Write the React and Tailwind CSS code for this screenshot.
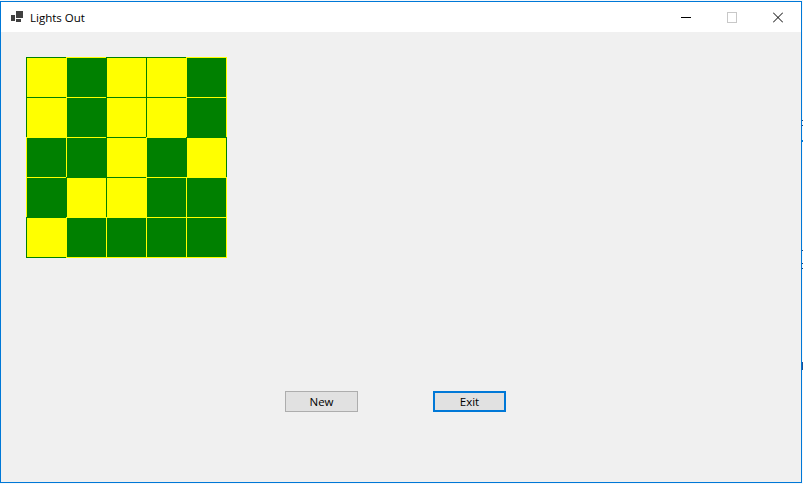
import React from 'react'

const Y = 1
const G = 0

const board = [
    [Y, G, Y, Y, G],
    [Y, G, Y, Y, G],
    [G, G, Y, G, Y],
    [G, Y, Y, G, G],
    [Y, G, G, G, G],
]

function Cell({ on }) {
    // cells are a pixel wider than their track, so each border sits on the last one
    return (
        <div
            className={
                on
                    ? 'w-[41px] h-[41px] bg-[#ffff00] border border-[#008000]'
                    : 'w-[41px] h-[41px] bg-[#008000] border border-[#ffff00]'
            }
        />
    )
}

export default function App() {
    return (
        <div className="relative w-[803px] h-[484px] pt-[1px] bg-[#f4f8fc] overflow-hidden font-['Open_Sans','Liberation_Sans',sans-serif] text-[11.5px] text-black">
            <div className="w-[802px] h-[482px] flex flex-col border border-[#0078d7]">
                {/* Title bar */}
                <div className="h-[30px] bg-white flex items-center shrink-0">
                    <svg className="ml-[10px] mt-[1px]" width="13" height="13" viewBox="0 0 13 13" fill="#404040">
                        <rect x="0" y="4" width="4" height="6" />
                        <rect x="5" y="0" width="7" height="7" />
                        <rect x="5" y="8" width="5" height="3" />
                    </svg>
                    <span className="ml-[6px] mt-[1px]">Lights Out</span>
                    <div className="ml-auto mr-[18px] flex items-center gap-[36px] mt-[1px]">
                        <svg width="10" height="11" viewBox="0 0 10 11" stroke="#000" shapeRendering="crispEdges">
                            <line x1="0" y1="5.5" x2="10" y2="5.5" />
                        </svg>
                        <svg width="10" height="11" viewBox="0 0 10 11" fill="none" stroke="#c8c8c8" shapeRendering="crispEdges">
                            <rect x="0.5" y="0.5" width="9" height="10" />
                        </svg>
                        <svg width="10" height="11" viewBox="0 0 10 11" stroke="#000" strokeWidth="1">
                            <line x1="0" y1="0.5" x2="10" y2="10.5" />
                            <line x1="10" y1="0.5" x2="0" y2="10.5" />
                        </svg>
                    </div>
                </div>

                {/* Client area */}
                <div className="flex-1 bg-[#f0f0f0] flex flex-col">
                    <div className="ml-[25px] mt-[25px] grid grid-cols-[repeat(5,40px)] grid-rows-[repeat(5,40px)] w-[200px]">
                        {board.flat().map((on, i) => (
                            <Cell key={i} on={on === Y} />
                        ))}
                    </div>
                    <div className="ml-[284px] mt-[134px] flex gap-[75px]">
                        <button className="w-[73px] h-[21px] bg-[#e1e1e1] border border-[#adadad] flex items-center justify-center">New</button>
                        <button className="w-[73px] h-[21px] bg-[#e1e1e1] border-2 border-[#0078d7] flex items-center justify-center">Exit</button>
                    </div>
                </div>
            </div>

            {/* bits of the window behind, showing past the right edge */}
            <div className="absolute left-[802px] top-[120px] w-[1px] h-[1px] bg-[#1f3f6f]" />
            <div className="absolute left-[802px] top-[125px] w-[1px] h-[1px] bg-[#1f3f6f]" />
            <div className="absolute left-[802px] top-[140px] w-[1px] h-[2px] bg-[#0078d7]" />
            <div className="absolute left-[802px] top-[250px] w-[1px] h-[1px] bg-[#1f3f6f]" />
            <div className="absolute left-[802px] top-[263px] w-[1px] h-[1px] bg-[#1f3f6f]" />
            <div className="absolute left-[802px] top-[268px] w-[1px] h-[1px] bg-[#1f3f6f]" />
            <div className="absolute left-[802px] top-[362px] w-[1px] h-[8px] bg-[#1f4f8f]" />
        </div>
    )
}
